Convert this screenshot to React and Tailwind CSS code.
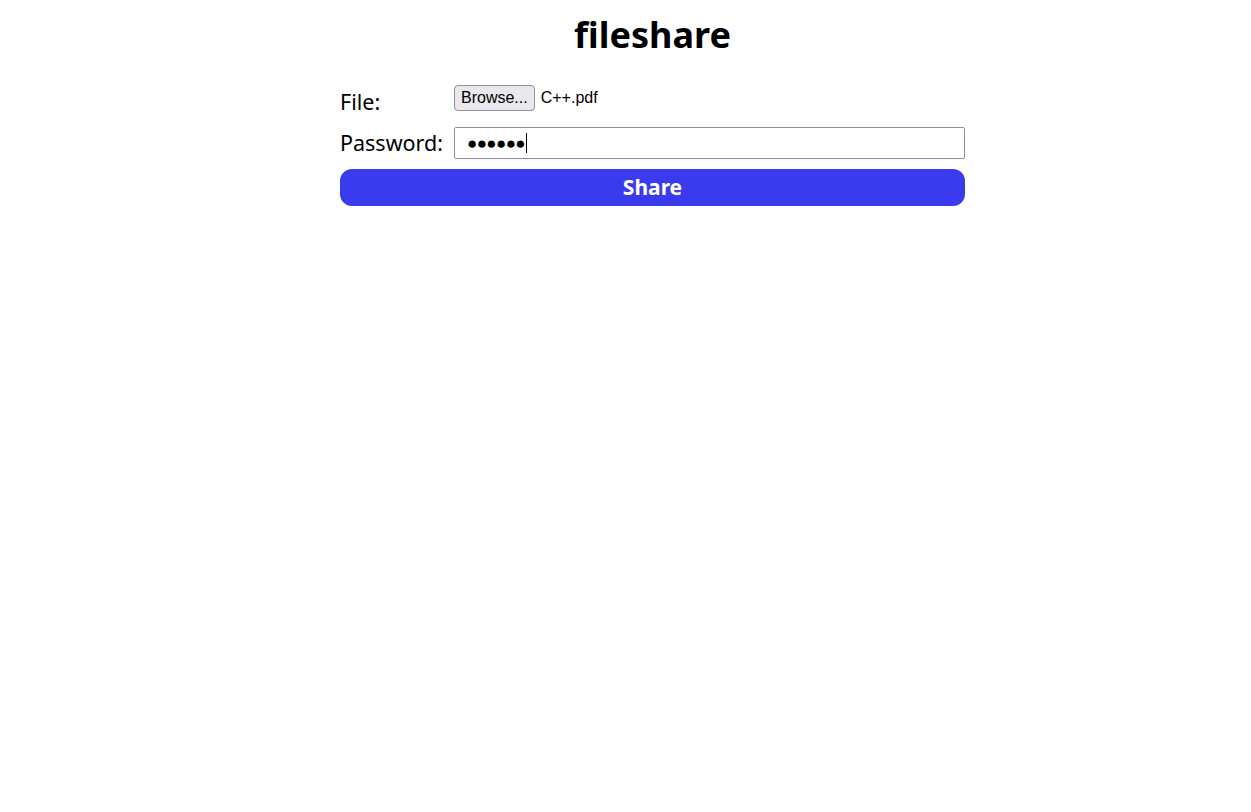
export default function App() {
  return (
    <div className="min-h-screen bg-white text-black font-['Noto_Sans',sans-serif]">
      <div className="ml-[340px] w-[625px]">
        <h1 className="text-center text-[36px] font-bold leading-none pt-[17px] pb-[30px]">fileshare</h1>

        <div className="grid grid-cols-[114px_1fr] items-center gap-y-[14px]">
          <label className="text-[21.5px] leading-none pt-[8px]">File:</label>
          <div className="flex items-center gap-[6px] h-[26px] font-['Liberation_Sans',sans-serif] text-[16px]">
            <span className="h-[26px] px-[6px] flex items-center bg-[#e9e9ed] border border-[#8f8f9d] rounded-[4px]">Browse...</span>
            <span>C++.pdf</span>
          </div>

          <label className="text-[21.5px] leading-none">Password:</label>
          <div className="h-[32px] border border-[#8f8f9d] rounded-[2px] flex items-center pl-[12px]">
            <span className="text-[17px] tracking-[-0.6px] leading-none">●●●●●●</span>
            <span className="ml-[1px] w-px h-[20px] bg-black"></span>
          </div>
        </div>

        <button className="mt-[10px] w-full h-[37px] rounded-[12px] bg-[#3a3aef] text-white text-[21px] font-bold leading-none">
          Share
        </button>
      </div>
    </div>
  )
}
